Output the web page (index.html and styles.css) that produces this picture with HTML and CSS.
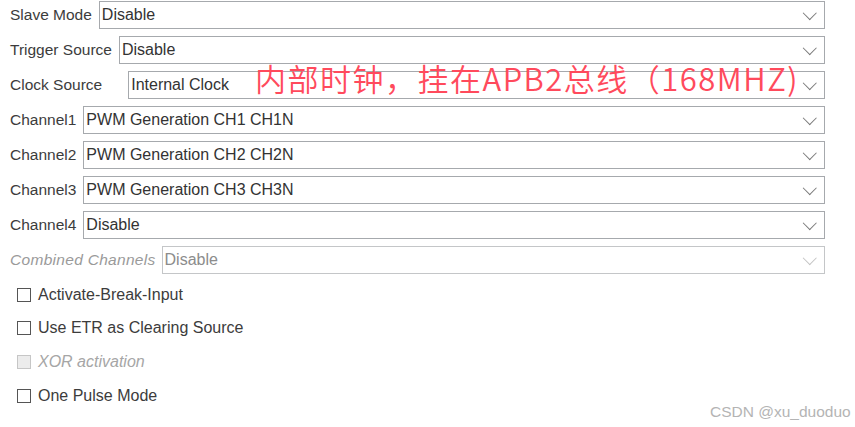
FILE: index.html
```html
<!DOCTYPE html>
<html>
<head>
<meta charset="utf-8">
<link rel="stylesheet" href="styles.css">
</head>
<body>
<div class="panel">
  <div class="row"><span class="label">Slave Mode</span><div class="select"><span class="value">Disable</span><span class="chev"></span></div></div>
  <div class="row"><span class="label">Trigger Source</span><div class="select"><span class="value">Disable</span><span class="chev"></span></div></div>
  <div class="row"><span class="label label-clock">Clock Source</span><div class="select"><span class="value">Internal Clock</span><span class="chev"></span></div></div>
  <div class="row"><span class="label">Channel1</span><div class="select"><span class="value">PWM Generation CH1 CH1N</span><span class="chev"></span></div></div>
  <div class="row"><span class="label">Channel2</span><div class="select"><span class="value">PWM Generation CH2 CH2N</span><span class="chev"></span></div></div>
  <div class="row"><span class="label">Channel3</span><div class="select"><span class="value">PWM Generation CH3 CH3N</span><span class="chev"></span></div></div>
  <div class="row"><span class="label">Channel4</span><div class="select"><span class="value">Disable</span><span class="chev"></span></div></div>
  <div class="row disabled"><span class="label label-combined">Combined Channels</span><div class="select"><span class="value">Disable</span><span class="chev"></span></div></div>

  <div class="checks">
    <div class="check"><span class="box"></span><span class="ctext">Activate-Break-Input</span></div>
    <div class="check"><span class="box"></span><span class="ctext">Use ETR as Clearing Source</span></div>
    <div class="check disabled"><span class="box"></span><span class="ctext">XOR activation</span></div>
    <div class="check"><span class="box"></span><span class="ctext">One Pulse Mode</span></div>
  </div>
</div>
<div class="note">内部时钟，挂在APB2总线（168MHZ)</div>
<div class="watermark">CSDN @xu_duoduo</div>
</body>
</html>
```

FILE: styles.css
```css
html, body {
  margin: 0;
  padding: 0;
  background: #ffffff;
}
body {
  width: 855px;
  height: 427px;
  position: relative;
  overflow: hidden;
  font-family: "Liberation Sans", Arial, sans-serif;
  font-size: 15.5px;
  color: #3c3c3c;
}
.panel {
  padding: 1px 30px 0 10px;
  display: flex;
  flex-direction: column;
  gap: 7px;
}
.row {
  display: flex;
  align-items: center;
  height: 28px;
}
.label {
  white-space: nowrap;
  padding-right: 7px;
}
.label-clock {
  padding-right: 26px;
}
.label-combined {
  letter-spacing: 0.3px;
  padding-right: 6px;
}
.select {
  flex: 1;
  height: 28px;
  box-sizing: border-box;
  border: 1px solid #a6a9ad;
  display: flex;
  align-items: center;
  padding-left: 2px;
  position: relative;
  color: #333333;
  font-size: 16px;
}
.value {
  flex: 1;
  white-space: nowrap;
}
.chev {
  width: 8.5px;
  height: 8.5px;
  border-right: 1.2px solid #7a7a7a;
  border-bottom: 1.2px solid #7a7a7a;
  transform: rotate(45deg);
  margin: 0 10px 5px 0;
}
.disabled .label {
  font-style: italic;
  color: #9a9a9a;
}
.disabled .select {
  border-color: #c4c6c8;
  color: #8c8c8c;
}
.disabled .chev {
  border-color: #c4c4c4;
}
.checks {
  display: flex;
  flex-direction: column;
  padding-left: 7px;
  margin-top: -3px;
  font-size: 16px;
}
.check {
  display: flex;
  align-items: center;
  height: 33.6px;
}
.box {
  width: 14px;
  height: 14px;
  box-sizing: border-box;
  border: 1px solid #555555;
  background: #ffffff;
  margin-right: 7px;
}
.check.disabled .box {
  border-color: #c6c6c6;
  background: #ececec;
}
.check.disabled .ctext {
  font-style: italic;
  color: #a6a6a6;
}
.note {
  position: absolute;
  left: 255px;
  top: 59px;
  font-family: "Noto Sans CJK SC", "Noto Sans", sans-serif;
  font-weight: 350;
  font-size: 31px;
  line-height: 38px;
  letter-spacing: 1.5px;
  color: #ff4a5c;
  white-space: nowrap;
}
.watermark {
  position: absolute;
  left: 710px;
  top: 403px;
  font-size: 15.5px;
  color: #b4b4b4;
  white-space: nowrap;
}
```
